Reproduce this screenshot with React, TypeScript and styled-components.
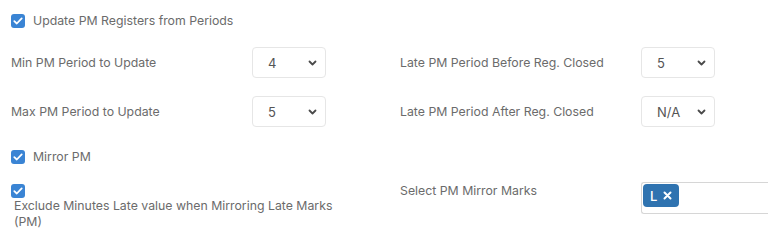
import React from "react";
import styled, { createGlobalStyle } from "styled-components";

const Global = createGlobalStyle`
  html, body { margin: 0; padding: 0; background: #fff; }
  body { font-family: Inter, "Noto Sans", sans-serif; font-size: 12.3px; color: #6b6b6b; }
`;

const Page = styled.div`
  padding: 13px 0 0 11px;
  width: 768px;
  box-sizing: border-box;
  overflow: hidden;
  height: 233px;
`;

const CheckRow = styled.label<{ $mt?: number }>`
  display: flex;
  align-items: center;
  gap: 8px;
  margin-top: ${(p) => p.$mt ?? 0}px;
  height: 15px;
  line-height: 15px;
`;

const Box = styled.span<{ $mt?: number }>`
  width: 14px;
  height: 14px;
  margin-top: ${(p) => p.$mt ?? 0}px;
  border-radius: 3px;
  background: #3a84d4;
  display: inline-flex;
  align-items: center;
  justify-content: center;
  flex: none;
`;

const Grid = styled.div<{ $mt: number }>`
  display: grid;
  grid-template-columns: 389px 389px;
  margin-top: ${(p) => p.$mt}px;
  row-gap: 18px;
`;

const Field = styled.div`
  display: grid;
  grid-template-columns: 241px auto;
  align-items: center;
`;

const Label = styled.span`
  color: #6b6b6b;
`;

const Select = styled.div`
  width: 74px;
  height: 31px;
  box-sizing: border-box;
  border: 1px solid #e6e6e6;
  border-radius: 4px;
  display: flex;
  align-items: center;
  justify-content: space-between;
  padding: 0 8px 0 15px;
  color: #555;
  font-size: 13px;
`;

const Bottom = styled.div`
  display: grid;
  grid-template-columns: 389px 389px;
  margin-top: 18px;
`;

const Stack = styled.div`
  display: flex;
  flex-direction: column;
`;

const Wrapped = styled.div`
  margin-left: 3px;
  line-height: 16px;
  width: 340px;
`;

const Multi = styled.div`
  width: 140px;
  height: 32px;
  box-sizing: border-box;
  border: 1px solid #d6d6d6;
  border-right: none;
  border-radius: 3px 0 0 3px;
  padding: 1px 0 0 1px;
  display: flex;
  align-items: flex-start;
`;

const Tag = styled.span`
  background: #2f73b0;
  color: #fff;
  border-radius: 4px;
  height: 23px;
  padding: 0 7px 0 7px;
  display: inline-flex;
  align-items: center;
  gap: 6px;
  font-size: 13px;
  font-weight: 500;
`;

const MarksField = styled.div`
  display: grid;
  grid-template-columns: 241px auto;
  align-items: start;
`;

const MarksLabel = styled.span`
  color: #6b6b6b;
  line-height: 15px;
  padding-top: 1px;
`;

const CheckMark = () => (
  <svg width="10" height="8" viewBox="0 0 10 8">
    <path d="M1.3 4.2 L3.8 6.5 L8.7 1.4" fill="none" stroke="#fff" strokeWidth="1.8" strokeLinecap="round" strokeLinejoin="round" />
  </svg>
);

const Chevron = () => (
  <svg width="9" height="6" viewBox="0 0 9 6">
    <path d="M1.5 1.5 L4.5 4.5 L7.5 1.5" fill="none" stroke="#4a4a4a" strokeWidth="1.8" strokeLinecap="round" strokeLinejoin="round" />
  </svg>
);

const Dropdown = ({ value }: { value: string }) => (
  <Select>
    <span>{value}</span>
    <Chevron />
  </Select>
);

export default function App() {
  return (
    <>
      <Global />
      <Page>
        <CheckRow>
          <Box>
            <CheckMark />
          </Box>
          <span>Update PM Registers from Periods</span>
        </CheckRow>
        <Grid $mt={19}>
          <Field>
            <Label>Min PM Period to Update</Label>
            <Dropdown value="4" />
          </Field>
          <Field>
            <Label>Late PM Period Before Reg. Closed</Label>
            <Dropdown value="5" />
          </Field>
          <Field>
            <Label>Max PM Period to Update</Label>
            <Dropdown value="5" />
          </Field>
          <Field>
            <Label>Late PM Period After Reg. Closed</Label>
            <Dropdown value="N/A" />
          </Field>
        </Grid>
        <CheckRow $mt={22}>
          <Box>
            <CheckMark />
          </Box>
          <span>Mirror PM</span>
        </CheckRow>
        <Bottom>
          <Stack>
            <Box $mt={2}>
              <CheckMark />
            </Box>
            <Wrapped>Exclude Minutes Late value when Mirroring Late Marks (PM)</Wrapped>
          </Stack>
          <MarksField>
            <MarksLabel>Select PM Mirror Marks</MarksLabel>
            <Multi>
              <Tag>
                <span>L</span>
                <svg width="9" height="9" viewBox="0 0 9 9">
                  <path d="M1.5 1.5 L7.5 7.5 M7.5 1.5 L1.5 7.5" stroke="#fff" strokeWidth="2" strokeLinecap="round" />
                </svg>
              </Tag>
            </Multi>
          </MarksField>
        </Bottom>
      </Page>
    </>
  );
}
